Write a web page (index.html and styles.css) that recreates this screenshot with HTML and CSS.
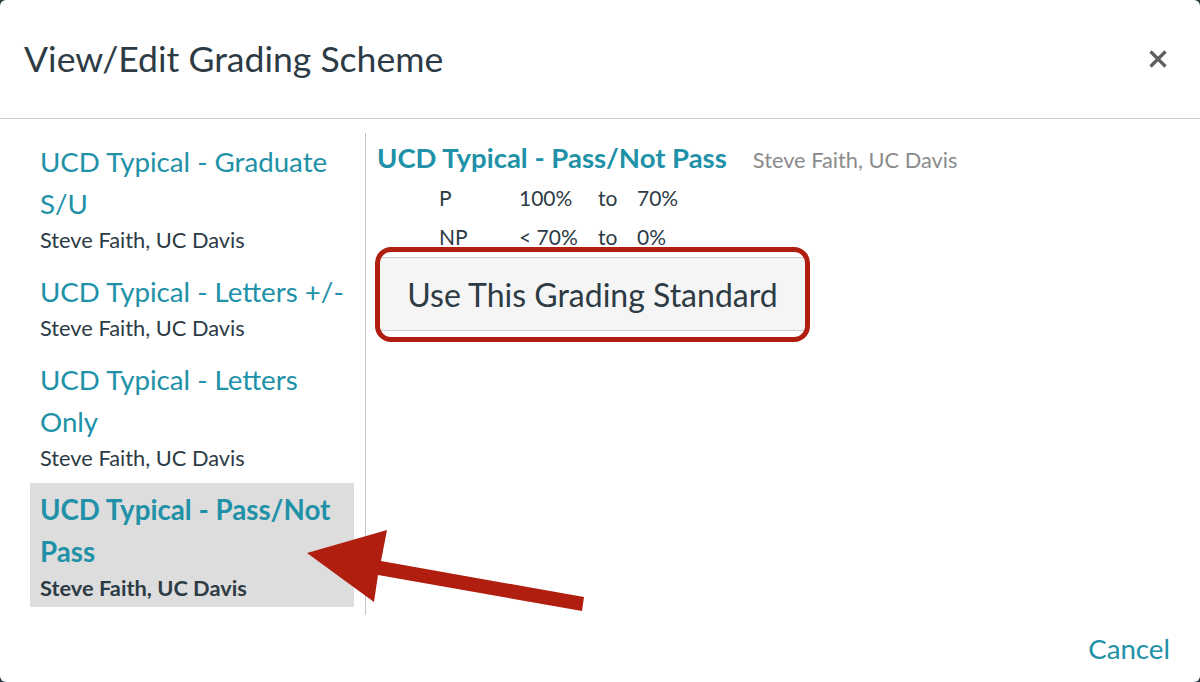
FILE: index.html
```html
<!DOCTYPE html>
<html lang="en">
<head>
<meta charset="utf-8">
<title>View/Edit Grading Scheme</title>
<link rel="stylesheet" href="styles.css">
</head>
<body>
<div class="dialog">
  <header class="header">
    <h1 class="title">View/Edit Grading Scheme</h1>
    <button class="close" aria-label="Close">
      <svg width="20" height="20" viewBox="0 0 20 20"><path d="M2.5 2.5 L17.5 17.5 M17.5 2.5 L2.5 17.5" stroke="#5f5f5f" stroke-width="3.2" stroke-linecap="butt" fill="none"/></svg>
    </button>
  </header>
  <main class="body">
    <aside class="list-col">
      <ul class="list">
        <li class="item">
          <a class="item-title">UCD Typical - Graduate S/U</a>
          <div class="item-sub">Steve Faith, UC Davis</div>
        </li>
        <li class="item">
          <a class="item-title">UCD Typical - Letters +/-</a>
          <div class="item-sub">Steve Faith, UC Davis</div>
        </li>
        <li class="item">
          <a class="item-title">UCD Typical - Letters Only</a>
          <div class="item-sub">Steve Faith, UC Davis</div>
        </li>
        <li class="item selected">
          <a class="item-title">UCD Typical - Pass/Not Pass</a>
          <div class="item-sub">Steve Faith, UC Davis</div>
        </li>
      </ul>
    </aside>
    <section class="detail">
      <div class="detail-head">
        <h2 class="detail-title">UCD Typical - Pass/Not Pass</h2>
        <span class="detail-owner">Steve Faith, UC Davis</span>
      </div>
      <div class="scheme">
        <span>P</span><span>100%</span><span>to</span><span>70%</span>
        <span>NP</span><span>&lt; 70%</span><span>to</span><span>0%</span>
      </div>
      <div class="use-wrap">
        <button class="use-btn">Use This Grading Standard</button>
        <span class="highlight"></span>
      </div>
    </section>
  </main>
  <footer class="footer">
    <a class="cancel">Cancel</a>
  </footer>
  <svg class="arrow" width="1200" height="682" viewBox="0 0 1200 682">
    <polygon points="307,553 387,530 381,561 584,597 582,611 378,575 374,602" fill="#b01e10"/>
  </svg>
</div>
</body>
</html>
```
FILE: styles.css
```css
* { box-sizing: border-box; }
html, body { margin: 0; padding: 0; }
body {
  background: #2d3b45;
  font-family: Lato, "Noto Sans", sans-serif;
  color: #2d3b45;
  width: 1200px;
  height: 682px;
  overflow: hidden;
}
.dialog {
  position: relative;
  width: 1200px;
  height: 682px;
  background: #fff;
  border-radius: 6px;
  display: flex;
  flex-direction: column;
  overflow: hidden;
}
.header {
  height: 119px;
  flex: none;
  border-bottom: 1px solid #c7cdd1;
  display: flex;
  align-items: center;
  justify-content: space-between;
  padding: 0 32px 0 24px;
}
.title {
  margin: 0;
  font-weight: 400;
  font-size: 35.6px;
  line-height: 40px;
  color: #2d3b45;
}
.close {
  border: 0;
  background: none;
  padding: 0;
  width: 20px;
  height: 20px;
  display: flex;
}
.body {
  flex: 1;
  display: flex;
  padding: 14px 0 0 30px;
  min-height: 0;
}
.list-col {
  width: 336px;
  flex: none;
  padding: 2px 11px 8px 0;
  border-right: 1px solid #c4c4c4;
}
.list {
  list-style: none;
  margin: 0;
  padding: 0;
  display: flex;
  flex-direction: column;
  gap: 6px;
}
.item {
  padding: 6px 10px 4px;
}
.item-title {
  display: block;
  font-size: 27.7px;
  line-height: 42px;
  color: #2191a8;
}
.item-sub {
  font-size: 21.8px;
  line-height: 30px;
  color: #2d3b45;
}
.selected {
  background: #dddddd;
}
.selected .item-title,
.selected .item-sub {
  font-weight: 700;
}
.detail {
  flex: 1;
  padding: 7px 0 0 11px;
}
.detail-head {
  display: flex;
  align-items: baseline;
  gap: 26px;
}
.detail-title {
  margin: 0;
  font-size: 27.5px;
  line-height: 36px;
  font-weight: 700;
  color: #2191a8;
}
.detail-owner {
  font-size: 21.8px;
  color: #8b8b8b;
}
.scheme {
  display: grid;
  grid-template-columns: 80px 79px 39px auto;
  margin: 2px 0 0 62px;
  font-size: 21px;
  line-height: 39px;
  width: max-content;
}
.use-wrap {
  position: relative;
  display: inline-block;
  margin: 1px 0 0 0;
}
.use-btn {
  width: 431px;
  height: 74px;
  background: #f5f5f5;
  border: 1px solid #c7cdd1;
  border-left: 0;
  border-right: 0;
  border-radius: 0;
  font-family: Lato, "Noto Sans", sans-serif;
  font-size: 32px;
  color: #2d3b45;
  padding: 0;
  display: block;
}
.highlight {
  position: absolute;
  left: -2px;
  right: -2px;
  top: -10px;
  bottom: -11px;
  border: 5px solid #b01e10;
  border-radius: 16px;
  pointer-events: none;
}
.footer {
  height: 67px;
  flex: none;
  display: flex;
  align-items: center;
  justify-content: flex-end;
  padding-right: 30px;
}
.cancel {
  font-size: 27.7px;
  color: #2191a8;
}
.arrow {
  position: absolute;
  left: 0;
  top: 0;
  pointer-events: none;
}
```
